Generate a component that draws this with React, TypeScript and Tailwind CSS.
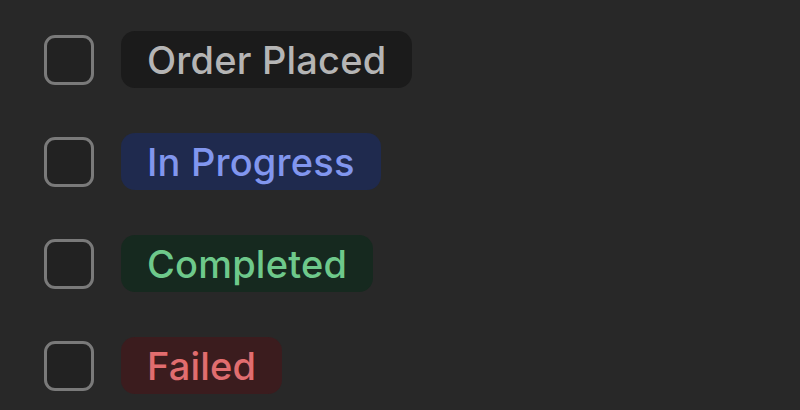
const statuses = [
  { label: "Order Placed", pill: "bg-[#1b1b1b] text-[#b5b5b5]" },
  { label: "In Progress", pill: "bg-[#1f2a4e] text-[#8196ee]" },
  { label: "Completed", pill: "bg-[#16291f] text-[#6ec98b]" },
  { label: "Failed", pill: "bg-[#3b1c1e] text-[#e16d6f]" },
];

export default function App() {
  return (
    <div className="w-[800px] h-[410px] bg-[#282828] pl-[44px] pt-[31px] flex flex-col gap-[45px] font-['Inter',sans-serif] overflow-hidden">
      {statuses.map((s) => (
        <div key={s.label} className="flex items-center gap-[27px]">
          <div className="w-[50px] h-[50px] rounded-[11px] border-[3px] border-[#7a7a7a] bg-[#222222] shrink-0" />
          <span
            className={`h-[57px] px-[26px] rounded-[14px] flex items-center text-[38px] font-medium leading-none tracking-[0.2px] ${s.pill}`}
          >
            {s.label}
          </span>
        </div>
      ))}
    </div>
  );
}
